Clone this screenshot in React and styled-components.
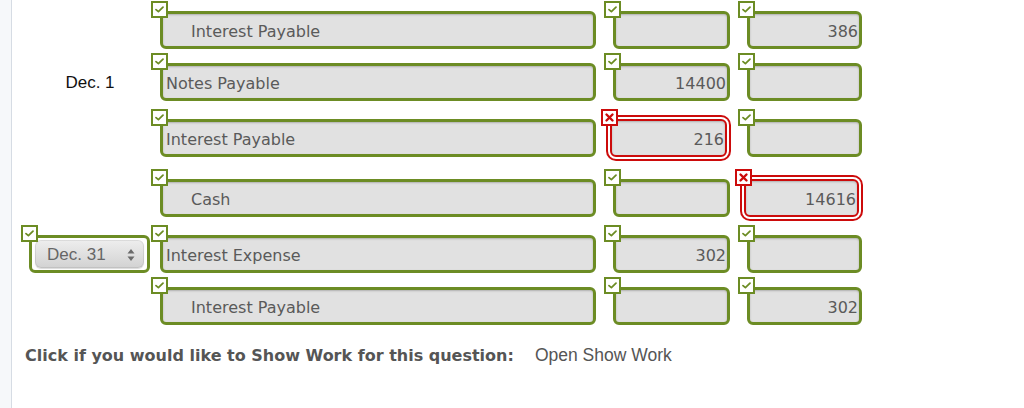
import React from 'react';
import styled, { createGlobalStyle, css } from 'styled-components';

const GREEN = '#6c8c24';
const RED = '#cc0b0b';

const GlobalStyle = createGlobalStyle`
  html, body {
    margin: 0;
    padding: 0;
    background: #ffffff;
  }
  body {
    font-family: "DejaVu Sans", Verdana, sans-serif;
  }
  * {
    box-sizing: border-box;
  }
`

const Page = styled.div`
  display: flex;
  min-height: 408px;
`

const Strip = styled.div`
  width: 12px;
  flex-shrink: 0;
  background: #f6f8fa;
  border-right: 1px solid #d6dce4;
`

const Main = styled.div`
  flex: 1;
  padding: 1px 0 0 9px;
`

const Rows = styled.div`
  display: flex;
  flex-direction: column;
  gap: 4px;
`

const Row = styled.div`
  display: flex;
  align-items: center;
`

const Cell = styled.div`
  position: relative;
  flex-shrink: 0;
  padding: 10px 0 0 ${props => props.pad || 9}px;
  width: ${props => props.width}px;
  margin-right: ${props => props.gap || 0}px;

  ${props => props.error && css`
    margin-top: 4px;
    margin-bottom: 4px;
    margin-left: -3px;
    margin-right: ${(props.gap || 0) + 3}px;
  `}
`

const Mark = styled.div`
  position: absolute;
  top: 0;
  left: 0;
  z-index: 2;
  width: 17px;
  height: 17px;
  background: #ffffff;
  border: 2px solid ${props => props.wrong ? RED : GREEN};
  display: flex;
  align-items: center;
  justify-content: center;
`

const Field = styled.div`
  height: 38px;
  width: 100%;
  background: #e1e1e1;
  border: 3px solid ${props => props.error ? RED : GREEN};
  border-radius: 6px;
  box-shadow: inset 0 1px 2px rgba(0, 0, 0, 0.22);
  display: flex;
  align-items: center;
  justify-content: ${props => props.numeric ? 'flex-end' : 'flex-start'};
  padding: 3px ${props => props.numeric ? 1 : 4}px 0 ${props => props.indent ? 28 : 3}px;
  font-size: 16px;
  color: #5a5a5a;
  white-space: nowrap;

  ${props => props.error && css`
    border-width: 2px;
    box-shadow: inset 0 1px 2px rgba(0, 0, 0, 0.22), 0 0 0 2px #ffffff, 0 0 0 4px ${RED};
  `}
`

const DateText = styled.div`
  height: 38px;
  display: flex;
  align-items: center;
  justify-content: center;
  padding-top: 1px;
  font-family: "Liberation Sans", Arial, sans-serif;
  font-size: 17px;
  color: #111111;
`

const DateBox = styled.div`
  height: 38px;
  width: 121px;
  border: 3px solid ${GREEN};
  border-radius: 6px;
  background: #ffffff;
  padding: 2px 3px;
`

const SelectButton = styled.div`
  height: 100%;
  border-radius: 6px;
  background: linear-gradient(#eeeeee, #d2d2d2);
  box-shadow: inset 0 0 0 1px rgba(0, 0, 0, 0.08), 0 1px 1px rgba(0, 0, 0, 0.15);
  display: flex;
  align-items: center;
  justify-content: space-between;
  padding: 1px 9px 0 12px;
  font-family: "Liberation Sans", Arial, sans-serif;
  font-size: 17px;
  color: #666666;
`

const Footer = styled.div`
  display: flex;
  align-items: baseline;
  gap: 21px;
  margin: 20px 0 0 4px;
  color: #555555;
`

const Prompt = styled.span`
  font-family: "DejaVu Sans", Verdana, sans-serif;
  font-weight: bold;
  font-size: 16px;
`

const Link = styled.span`
  font-family: "Liberation Sans", Arial, sans-serif;
  font-size: 17.5px;
  color: #555555;
  cursor: pointer;
`

const Check = () => (
  <svg width="11" height="11" viewBox="0 0 11 11">
    <path d="M2 5.6 L4.4 7.6 L9 3.2" fill="none" stroke={GREEN} strokeWidth="1.8" strokeLinecap="round" strokeLinejoin="round" />
  </svg>
)

const Cross = () => (
  <svg width="11" height="11" viewBox="0 0 11 11">
    <path d="M2.5 2.5 L8.5 8.5 M8.5 2.5 L2.5 8.5" fill="none" stroke={RED} strokeWidth="2.4" strokeLinecap="round" />
  </svg>
)

const Arrows = () => (
  <svg width="8" height="14" viewBox="0 0 8 14">
    <path d="M4 1 L7.5 5.5 L0.5 5.5 Z M4 13 L7.5 8.5 L0.5 8.5 Z" fill="#6a6a6a" />
  </svg>
)

const Entry = ({ value, width, gap, numeric, indent, error }) => (
  <Cell width={width} gap={gap} error={error}>
    <Mark wrong={error}>{error ? <Cross /> : <Check />}</Mark>
    <Field numeric={numeric} indent={indent} error={error}>{value}</Field>
  </Cell>
)

const rows = [
  { account: 'Interest Payable', indent: true, debit: '', credit: '386' },
  { date: 'Dec. 1', account: 'Notes Payable', debit: '14400', credit: '' },
  { account: 'Interest Payable', debit: '216', credit: '', debitError: true },
  { account: 'Cash', indent: true, debit: '', credit: '14616', creditError: true },
  { select: 'Dec. 31', account: 'Interest Expense', debit: '302', credit: '' },
  { account: 'Interest Payable', indent: true, debit: '', credit: '302' },
];

const App = () => {
  return (
    <Page>
      <GlobalStyle />
      <Strip />
      <Main>
        <Rows>
          {rows.map((row, i) => (
            <Row key={i}>
              {row.select ? (
                <Cell width={130} pad={8}>
                  <Mark><Check /></Mark>
                  <DateBox>
                    <SelectButton>
                      <span>{row.select}</span>
                      <Arrows />
                    </SelectButton>
                  </DateBox>
                </Cell>
              ) : (
                <Cell width={130} pad={8}>
                  <DateText>{row.date}</DateText>
                </Cell>
              )}
              <Entry value={row.account} width={445} gap={8} indent={row.indent} />
              <Entry value={row.debit} width={126} gap={8} numeric error={row.debitError} />
              <Entry value={row.credit} width={124} numeric error={row.creditError} />
            </Row>
          ))}
        </Rows>
        <Footer>
          <Prompt>Click if you would like to Show Work for this question:</Prompt>
          <Link>Open Show Work</Link>
        </Footer>
      </Main>
    </Page>
  );
}

export default App;
